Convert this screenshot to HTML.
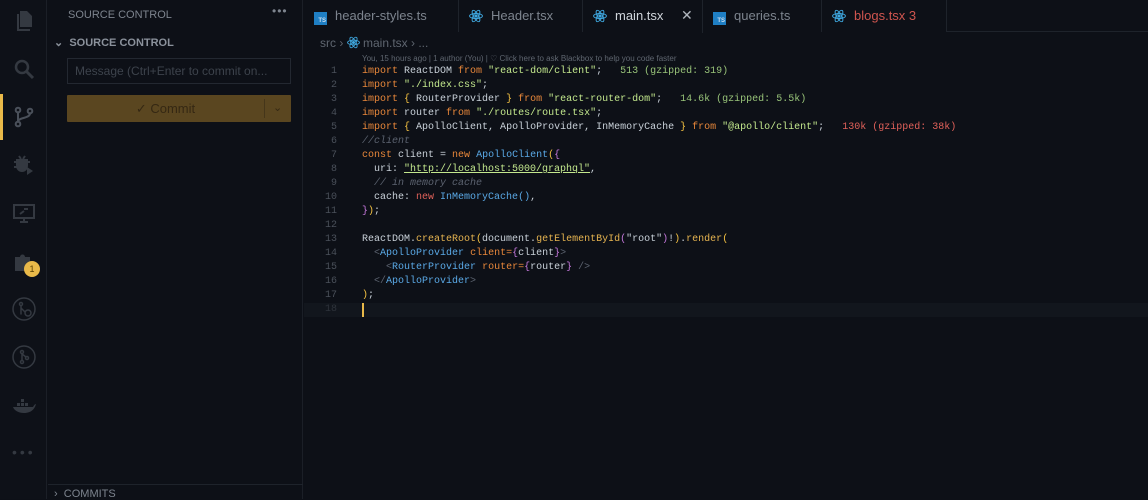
<!DOCTYPE html>
<html><head><meta charset="utf-8"><style>
*{margin:0;padding:0;box-sizing:border-box}
body{width:1148px;height:499px;overflow:hidden;background:#0d1017;font-family:"Liberation Sans",sans-serif;position:relative;color:#8b929c}
.abs{position:absolute}
#act{left:0;top:0;width:47px;height:499px;background:#0e1118;border-right:1px solid #1b1f27}
#side{left:48px;top:0;width:255px;height:499px;background:#0d1017;border-right:1px solid #1b1f27}
.ic{position:absolute;left:12px;width:24px;height:24px}
#tabs{left:304px;top:0;width:844px;height:32px;border-bottom:1px solid #1e232b;background:#0d1017}
.tab{position:absolute;top:0;height:32px;border-right:1px solid #1e232b;font-size:13px;line-height:31px;color:#7d848e;padding-left:10px;background:#0d1017}
.ts{display:inline-block;width:13px;height:13px;background:#1f7fc4;vertical-align:-2px;margin-right:8px;font-size:6px;color:#cde;line-height:18px;text-align:right;font-weight:bold;padding-right:1px}
.re{display:inline-block;vertical-align:-3px;margin-right:8px}
#code{left:304px;top:65px;width:844px;font-family:"Liberation Mono",monospace;font-size:10px;line-height:14px}
.ln{position:absolute;left:0;width:33px;text-align:right;color:#4a505a}
.cl{position:absolute;left:58px;white-space:pre;color:#c9d1d9}
.k{color:#e8873a}.s{color:#c3e88d}.y{color:#f5c242}.p{color:#c678dd}.f{color:#e6b450}.b{color:#5aa9e6}.c{color:#5c6370;font-style:italic}.g{color:#98c379}.r{color:#e0615a}.o{color:#e8873a}
</style></head><body>
<div id="act" class="abs">
 <svg class="ic" style="top:8px" viewBox="0 0 24 24"><path d="M8 3h7l5 5v11H8z" fill="#343941"/><path d="M5 6h2v15h11v2H5z" fill="#343941"/></svg>
 <svg class="ic" style="top:57px" viewBox="0 0 24 24"><circle cx="10" cy="10" r="6" fill="none" stroke="#343941" stroke-width="2.5"/><path d="M14.5 14.5L21 21" stroke="#343941" stroke-width="3"/></svg>
 <div class="abs" style="left:0;top:94px;width:3px;height:46px;background:#e9b949"></div>
 <svg class="ic" style="top:105px" viewBox="0 0 24 24" fill="none" stroke="#4a505a" stroke-width="2"><circle cx="6" cy="5" r="2.3"/><circle cx="6" cy="19" r="2.3"/><circle cx="18" cy="6" r="2.3"/><path d="M6 7.5v9M18 8.5c0 5-12 4-12 8"/></svg>
 <svg class="ic" style="top:152px" viewBox="0 0 24 24"><path d="M5 8h10v5c0 4-2 6-5 6s-5-2-5-6z M7 4l2 3M13 4l-2 3M2 10h3M15 10h3M2 15h3" fill="#343941" stroke="#343941" stroke-width="2"/><path d="M15 15l6 4-6 4z" fill="#343941"/></svg>
 <svg class="ic" style="top:201px" viewBox="0 0 24 24" fill="none" stroke="#343941" stroke-width="2"><rect x="2" y="4" width="20" height="13"/><path d="M8 21h8M12 17v4M8 13l4-3M12 8l4 0" /></svg>
 <svg class="ic" style="top:249px" viewBox="0 0 24 24"><path d="M3 8h5a2.5 2.5 0 1 1 5 0h5v5a2.5 2.5 0 1 1 0 5v4H3z" fill="#343941"/></svg>
 <div class="abs" style="left:24px;top:261px;width:16px;height:16px;border-radius:8px;background:#e9b949;color:#5a4000;font-size:9px;text-align:center;line-height:16px">1</div>
 <svg class="ic" style="top:297px" viewBox="0 0 24 24" fill="none" stroke="#343941" stroke-width="1.5"><circle cx="12" cy="12" r="11"/><circle cx="9" cy="7" r="1.5"/><path d="M9 8.5v9M9 11l4 4"/><circle cx="16" cy="16" r="3"/></svg>
 <svg class="ic" style="top:345px" viewBox="0 0 24 24" fill="none" stroke="#343941" stroke-width="1.5"><circle cx="12" cy="12" r="11"/><circle cx="10" cy="7" r="1.5"/><circle cx="10" cy="17" r="1.5"/><circle cx="15" cy="13" r="1.5"/><path d="M10 8.5v7M10 9l4 3"/></svg>
 <svg class="ic" style="top:394px" viewBox="0 0 24 24"><path d="M1 13h20c1-2 2-3 3-3-1 4-4 9-12 9-6 0-10-3-11-6z" fill="#343941"/><path d="M5 9h3v3H5zM9 9h3v3H9zM13 9h3v3h-3zM9 5h3v3H9z" fill="#343941"/></svg>
 <div class="abs" style="left:12px;top:444px;color:#343941;font-size:14px;letter-spacing:3px">•••</div>
</div>
<div id="side" class="abs">
 <div class="abs" style="left:20px;top:9px;font-size:11px;color:#7d848e">SOURCE CONTROL</div>
 <div class="abs" style="left:224px;top:4px;font-size:12px;color:#7d848e;letter-spacing:1px">•••</div>
 <div class="abs" style="left:6px;top:36px;font-size:11px;font-weight:bold;color:#8b929c">⌄&nbsp; SOURCE CONTROL</div>
 <div class="abs" style="left:19px;top:58px;width:224px;height:26px;border:1px solid #232831;background:#0d1017;font-size:12px;color:#3d434c;padding:5px 0 0 7px">Message (Ctrl+Enter to commit on...</div>
 <div class="abs" style="left:19px;top:95px;width:224px;height:27px;background:#5a4620;border-radius:1px">
  <div class="abs" style="left:0;top:0;width:197px;text-align:center;line-height:27px;font-size:13px;color:#352813">✓ Commit</div>
  <div class="abs" style="left:197px;top:4px;width:1px;height:19px;background:#45361a"></div>
  <div class="abs" style="left:206px;top:6px;font-size:11px;color:#352813">⌄</div>
 </div>
 <div class="abs" style="left:0;top:484px;width:255px;height:1px;background:#1e232b"></div>
 <div class="abs" style="left:6px;top:488px;font-size:11px;color:#7d848e">›&nbsp; COMMITS</div>
</div>
<div id="tabs" class="abs">
 <div class="tab" style="left:0;width:155px"><span class="ts">TS</span>header-styles.ts</div>
 <div class="tab" style="left:155px;width:124px"><svg class="re" width="14" height="14" viewBox="0 0 24 24" fill="none" stroke="#3fa8e0" stroke-width="1.6"><ellipse cx="12" cy="12" rx="11" ry="4.3"/><ellipse cx="12" cy="12" rx="11" ry="4.3" transform="rotate(60 12 12)"/><ellipse cx="12" cy="12" rx="11" ry="4.3" transform="rotate(120 12 12)"/><circle cx="12" cy="12" r="2" fill="#3fa8e0"/></svg>Header.tsx</div>
 <div class="tab" style="left:279px;width:120px;height:33px;color:#d0d5db"><svg class="re" width="14" height="14" viewBox="0 0 24 24" fill="none" stroke="#3fa8e0" stroke-width="1.6"><ellipse cx="12" cy="12" rx="11" ry="4.3"/><ellipse cx="12" cy="12" rx="11" ry="4.3" transform="rotate(60 12 12)"/><ellipse cx="12" cy="12" rx="11" ry="4.3" transform="rotate(120 12 12)"/><circle cx="12" cy="12" r="2" fill="#3fa8e0"/></svg>main.tsx<span style="position:absolute;left:98px;color:#b0b6be;font-size:14px">✕</span></div>
 <div class="tab" style="left:399px;width:119px"><span class="ts">TS</span>queries.ts</div>
 <div class="tab" style="left:518px;width:125px;color:#d0554f"><svg class="re" width="14" height="14" viewBox="0 0 24 24" fill="none" stroke="#3fa8e0" stroke-width="1.6"><ellipse cx="12" cy="12" rx="11" ry="4.3"/><ellipse cx="12" cy="12" rx="11" ry="4.3" transform="rotate(60 12 12)"/><ellipse cx="12" cy="12" rx="11" ry="4.3" transform="rotate(120 12 12)"/><circle cx="12" cy="12" r="2" fill="#3fa8e0"/></svg>blogs.tsx 3</div>
</div>
<div class="abs" style="left:320px;top:36px;font-size:12px;color:#5f6670">src › <svg width="13" height="13" viewBox="0 0 24 24" fill="none" stroke="#3fa8e0" stroke-width="1.6" style="vertical-align:-2px"><ellipse cx="12" cy="12" rx="11" ry="4.3"/><ellipse cx="12" cy="12" rx="11" ry="4.3" transform="rotate(60 12 12)"/><ellipse cx="12" cy="12" rx="11" ry="4.3" transform="rotate(120 12 12)"/><circle cx="12" cy="12" r="2" fill="#3fa8e0"/></svg> main.tsx › ...</div>
<div class="abs" style="left:362px;top:54px;font-size:8px;color:#5f6670">You, 15 hours ago | 1 author (You) | ♡ Click here to ask Blackbox to help you code faster</div>
<div class="abs" style="left:304px;top:303px;width:844px;height:14px;background:#12161d"></div>
<div class="abs" style="left:362px;top:303px;width:2px;height:14px;background:#e9b949"></div>
<div id="code" class="abs">
<div class="ln" style="top:0">1</div><div class="cl" style="top:0"><span class="k">import</span> ReactDOM <span class="k">from</span> <span class="s">"react-dom/client"</span>;   <span class="g">513 (gzipped: 319)</span></div>
<div class="ln" style="top:14px">2</div><div class="cl" style="top:14px"><span class="k">import</span> <span class="s">"./index.css"</span>;</div>
<div class="ln" style="top:28px">3</div><div class="cl" style="top:28px"><span class="k">import</span> <span class="y">{</span> RouterProvider <span class="y">}</span> <span class="k">from</span> <span class="s">"react-router-dom"</span>;   <span class="g">14.6k (gzipped: 5.5k)</span></div>
<div class="ln" style="top:42px">4</div><div class="cl" style="top:42px"><span class="k">import</span> router <span class="k">from</span> <span class="s">"./routes/route.tsx"</span>;</div>
<div class="ln" style="top:56px">5</div><div class="cl" style="top:56px"><span class="k">import</span> <span class="y">{</span> ApolloClient, ApolloProvider, InMemoryCache <span class="y">}</span> <span class="k">from</span> <span class="s">"@apollo/client"</span>;   <span class="r">130k (gzipped: 38k)</span></div>
<div class="ln" style="top:70px">6</div><div class="cl" style="top:70px"><span class="c">//client</span></div>
<div class="ln" style="top:84px">7</div><div class="cl" style="top:84px"><span class="k">const</span> client = <span class="k">new</span> <span class="b">ApolloClient</span><span class="y">(</span><span class="p">{</span></div>
<div class="ln" style="top:98px">8</div><div class="cl" style="top:98px">  uri: <span class="s" style="text-decoration:underline">"http://localhost:5000/graphql"</span>,</div>
<div class="ln" style="top:112px">9</div><div class="cl" style="top:112px">  <span class="c">// in memory cache</span></div>
<div class="ln" style="top:126px">10</div><div class="cl" style="top:126px">  cache: <span class="r">new</span> <span class="b">InMemoryCache</span><span class="b">()</span>,</div>
<div class="ln" style="top:140px">11</div><div class="cl" style="top:140px"><span class="p">}</span><span class="y">)</span>;</div>
<div class="ln" style="top:154px">12</div>
<div class="ln" style="top:168px">13</div><div class="cl" style="top:168px">ReactDOM.<span class="f">createRoot</span><span class="y">(</span>document.<span class="f">getElementById</span><span class="p">(</span>"root"<span class="p">)</span>!<span class="y">)</span>.<span class="f">render</span><span class="y">(</span></div>
<div class="ln" style="top:182px">14</div><div class="cl" style="top:182px">  <span class="c" style="font-style:normal">&lt;</span><span class="b">ApolloProvider</span> <span class="o">client=</span><span class="p">{</span>client<span class="p">}</span><span class="c" style="font-style:normal">&gt;</span></div>
<div class="ln" style="top:196px">15</div><div class="cl" style="top:196px">    <span class="c" style="font-style:normal">&lt;</span><span class="b">RouterProvider</span> <span class="o">router=</span><span class="p">{</span>router<span class="p">}</span> <span class="c" style="font-style:normal">/&gt;</span></div>
<div class="ln" style="top:210px">16</div><div class="cl" style="top:210px">  <span class="c" style="font-style:normal">&lt;/</span><span class="b">ApolloProvider</span><span class="c" style="font-style:normal">&gt;</span></div>
<div class="ln" style="top:224px">17</div><div class="cl" style="top:224px"><span class="y">)</span>;</div>
<div class="ln" style="top:238px;color:#2e333b">18</div>
</div>
</body></html>
